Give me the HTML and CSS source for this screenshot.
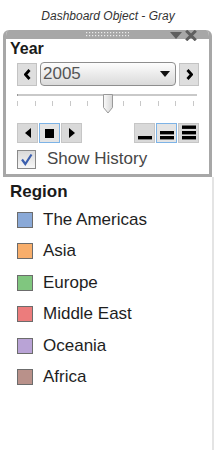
FILE: index.html
```html
<!DOCTYPE html>
<html>
<head>
<meta charset="utf-8">
<link rel="stylesheet" href="styles.css">
</head>
<body>
<div class="title">Dashboard Object - Gray</div>
<div class="panel">
  <div class="panel-header">
    <span></span>
    <svg class="grip" width="43" height="5" viewBox="0 0 43 5">
      <defs>
        <pattern id="dots" width="3" height="3" patternUnits="userSpaceOnUse">
          <rect width="1.2" height="1.2" fill="#ececec"/>
        </pattern>
      </defs>
      <rect width="43" height="5" fill="url(#dots)"/>
    </svg>
    <div class="header-icons">
      <svg class="menu-tri" width="12" height="7" viewBox="0 0 12 7"><path d="M0 0H12L6 7Z" fill="#5e5e5e"/></svg>
      <svg class="close" width="12" height="11" viewBox="0 0 12 11"><path d="M1.2 0.8L10.8 10.2M10.8 0.8L1.2 10.2" stroke="#5e5e5e" stroke-width="3"/></svg>
    </div>
  </div>
  <div class="panel-body">
    <div class="year-label">Year</div>
    <div class="controls">
      <div class="year-row">
        <button class="btn nav"><svg width="7" height="11" viewBox="0 0 7 11"><path d="M5.5 1L1.5 5.5L5.5 10" fill="none" stroke="#000" stroke-width="2.8"/></svg></button>
        <div class="select"><span>2005</span><svg width="10" height="6" viewBox="0 0 10 6"><path d="M0 0H10L5 6Z" fill="#111"/></svg></div>
        <button class="btn nav"><svg width="7" height="11" viewBox="0 0 7 11"><path d="M1.5 1L5.5 5.5L1.5 10" fill="none" stroke="#000" stroke-width="2.8"/></svg></button>
      </div>
      <div class="slider">
        <div class="track"></div>
        <div class="ticks">
          <i></i><i></i><i></i><i></i><i></i><i></i><i></i><i></i><i></i><i></i><i></i>
        </div>
        <svg class="thumb" width="12" height="20" viewBox="0 0 12 20">
          <defs>
            <linearGradient id="tg" x1="0" y1="0" x2="1" y2="0">
              <stop offset="0" stop-color="#fafafa"/>
              <stop offset="1" stop-color="#d6d6d6"/>
            </linearGradient>
          </defs>
          <path d="M1.5 0.5H10.5V13.5L6 19L1.5 13.5Z" fill="url(#tg)" stroke="#9a9a9a"/>
        </svg>
      </div>
      <div class="play-row">
        <div class="group">
          <button class="pbtn"><svg width="6" height="10" viewBox="0 0 6 10"><path d="M6 0V10L0 5Z" fill="#000"/></svg></button>
          <button class="pbtn selected"><svg width="9" height="9" viewBox="0 0 9 9"><rect width="9" height="9" fill="#000"/></svg></button>
          <button class="pbtn"><svg width="6" height="10" viewBox="0 0 6 10"><path d="M0 0V10L6 5Z" fill="#000"/></svg></button>
        </div>
        <div class="group">
          <button class="pbtn"><svg width="14" height="18" viewBox="0 0 14 18"><rect y="12" width="14" height="3.4" fill="#000"/></svg></button>
          <button class="pbtn selected"><svg width="14" height="18" viewBox="0 0 14 18"><rect y="7" width="14" height="3.4" fill="#000"/><rect y="12" width="14" height="3.4" fill="#000"/></svg></button>
          <button class="pbtn"><svg width="14" height="18" viewBox="0 0 14 18"><rect y="1.5" width="14" height="3.4" fill="#000"/><rect y="7" width="14" height="3.4" fill="#000"/><rect y="12" width="14" height="3.4" fill="#000"/></svg></button>
        </div>
      </div>
      <div class="history">
        <span class="checkbox"><svg width="17" height="17" viewBox="0 0 17 17"><path d="M4 8.5L7.3 13L13.5 3.5" fill="none" stroke="#3c5fae" stroke-width="2.2"/></svg></span>
        <span class="history-text">Show History</span>
      </div>
    </div>
  </div>
</div>
<div class="legend">
  <div class="region-title">Region</div>
  <div class="legend-list">
    <div class="legend-item"><span class="swatch americas"></span>The Americas</div>
    <div class="legend-item"><span class="swatch asia"></span>Asia</div>
    <div class="legend-item"><span class="swatch europe"></span>Europe</div>
    <div class="legend-item"><span class="swatch mideast"></span>Middle East</div>
    <div class="legend-item"><span class="swatch oceania"></span>Oceania</div>
    <div class="legend-item"><span class="swatch africa"></span>Africa</div>
  </div>
</div>
</body>
</html>
```
FILE: styles.css
```css
* { box-sizing: border-box; }
html, body { margin: 0; padding: 0; background: #fff; }
body {
  width: 216px;
  height: 450px;
  overflow: hidden;
  font-family: "Liberation Sans", Arial, sans-serif;
  color: #1e1e1e;
}
.title {
  padding-top: 9px;
  font-size: 12px;
  line-height: 15px;
  font-style: italic;
  color: #333;
  text-align: center;
}
.panel {
  margin: 6px 0 0 3px;
  width: 209px;
  border: 3px solid #a7a7a7;
  border-top: 0;
  border-radius: 6px 6px 0 0;
  overflow: hidden;
}
.panel-header {
  height: 9px;
  background: #a7a7a7;
  display: grid;
  grid-template-columns: 1fr auto 1fr;
  align-items: start;
}
.grip { display: block; margin-top: 2px; }
.header-icons {
  justify-self: end;
  display: flex;
  align-items: flex-start;
  gap: 3px;
  padding-right: 12px;
}
.header-icons svg { display: block; }
.menu-tri { margin-top: 2px; }
.panel-body {
  padding: 1px 10px 5px 4px;
}
.year-label {
  font-size: 16px;
  line-height: 18px;
  font-weight: bold;
  color: #1a1a1a;
}
.controls { margin-left: 7px; }
.year-row {
  margin-top: 4px;
  height: 24px;
  display: flex;
  align-items: center;
  gap: 3px;
}
.btn {
  width: 20px;
  height: 23px;
  padding: 0;
  border: 1px solid #c3c3c3;
  background: #dedede;
  display: flex;
  align-items: center;
  justify-content: center;
}
.btn svg { display: block; }
.select {
  flex: 1;
  height: 24px;
  border: 1px solid #8e8e8e;
  border-radius: 4px;
  background: linear-gradient(#fdfdfd, #dadada);
  display: flex;
  align-items: center;
  justify-content: space-between;
  padding: 0 5px 0 2px;
  font-size: 17px;
  color: #555;
}
.select svg { display: block; }
.slider {
  position: relative;
  width: 180px;
  height: 20px;
  margin-top: 8px;
}
.track {
  margin-top: 7px;
  height: 2px;
  background: #c9c9c9;
  border-left: 1px solid #999;
}
.ticks {
  margin-top: 5px;
  width: 177px;
  height: 5px;
  display: flex;
  justify-content: space-between;
}
.ticks i {
  display: block;
  width: 1px;
  height: 5px;
  background: #c8c8c8;
}
.thumb {
  position: absolute;
  left: 85px;
  top: 0;
  display: block;
}
.play-row {
  margin-top: 9px;
  display: flex;
  justify-content: space-between;
}
.group { display: flex; gap: 1px; }
.pbtn {
  width: 21px;
  height: 20px;
  padding: 0;
  border: 1px solid #c6c6c6;
  background: #d9d9d9;
  display: flex;
  align-items: center;
  justify-content: center;
}
.pbtn svg { display: block; }
.pbtn.selected {
  border-color: #7db3e6;
  background: #e4e4e4;
}
.history {
  margin-top: 6px;
  height: 20px;
  display: flex;
  align-items: center;
  gap: 11px;
}
.checkbox {
  width: 19px;
  height: 19px;
  border: 1px solid #8a8a8a;
  background: linear-gradient(#d9d9d9, #f7f7f7);
  display: flex;
  align-items: center;
  justify-content: center;
}
.checkbox svg { display: block; }
.history-text {
  font-size: 17px;
  line-height: 20px;
  color: #474747;
}
.legend {
  width: 214px;
  height: 273px;
  border-right: 2px solid #e4e4e4;
  padding: 5px 0 0 10px;
}
.region-title {
  font-size: 17px;
  line-height: 20px;
  font-weight: bold;
  color: #1a1a1a;
}
.legend-list {
  margin-top: 2px;
  padding-left: 7px;
}
.legend-item {
  height: 31.5px;
  display: flex;
  align-items: center;
  gap: 10px;
  font-size: 17px;
  color: #1e1e1e;
}
.swatch {
  width: 16px;
  height: 16px;
  border: 1px solid #6c6c6c;
  flex: none;
}
.americas { background: #8aa9d7; }
.asia { background: #f8ae6b; }
.europe { background: #80c67f; }
.mideast { background: #ec7c7c; }
.oceania { background: #b9a3d6; }
.africa { background: #b9918a; }
```
